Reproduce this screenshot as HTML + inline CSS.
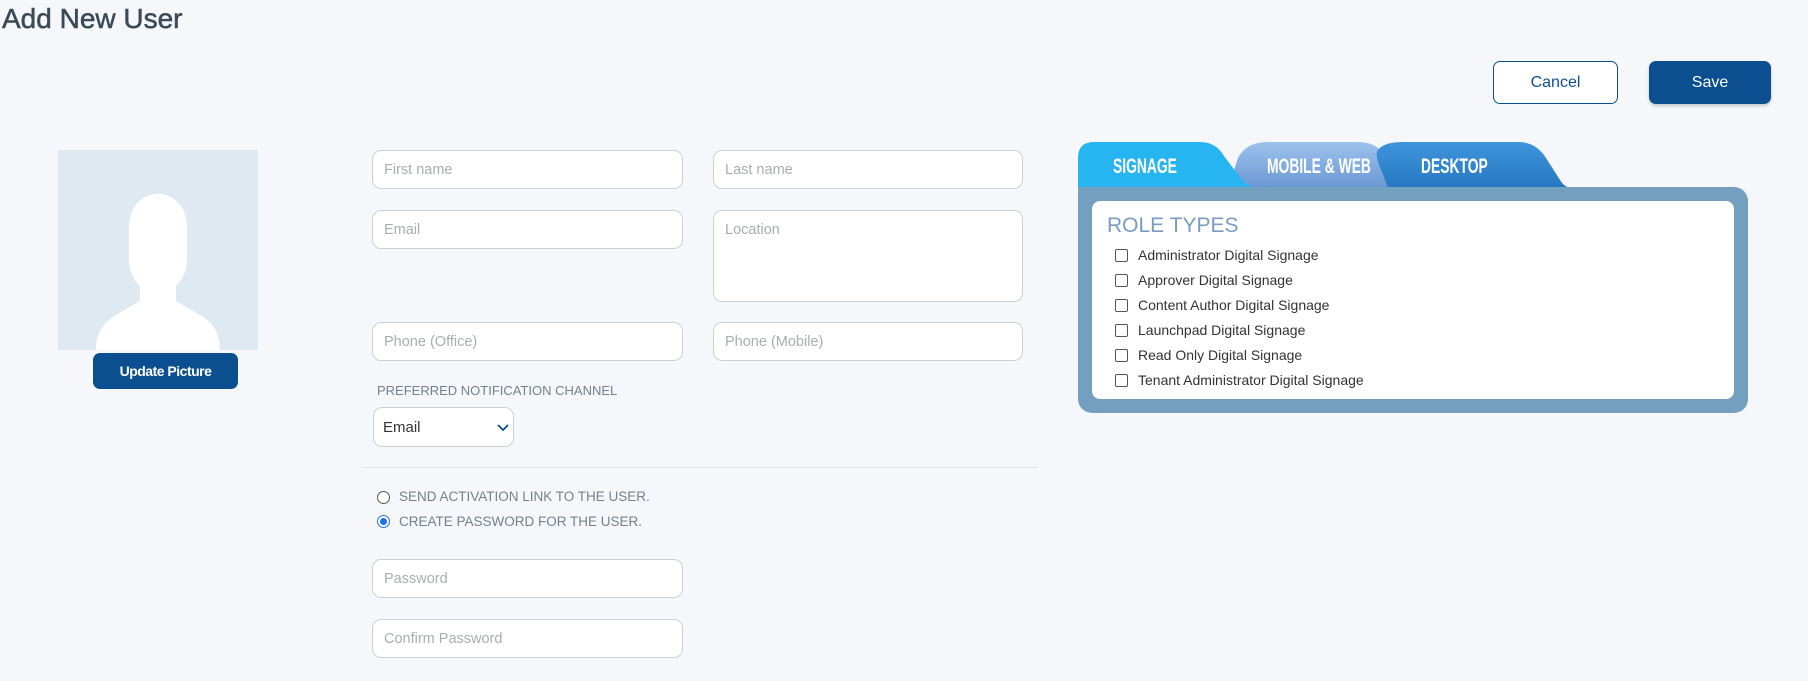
<!DOCTYPE html>
<html><head><meta charset="utf-8"><style>
*{box-sizing:border-box;margin:0;padding:0}
body{width:1808px;height:681px;background:#f5f7fb;font-family:"Liberation Sans",sans-serif;position:relative;overflow:hidden}
.a{position:absolute}
h1{position:absolute;left:2px;top:3px;font-size:28px;font-weight:normal;color:#3a4a56;-webkit-text-stroke:0.5px #3a4a56}
.btn{position:absolute;border-radius:7px;font-size:16px;display:flex;align-items:center;justify-content:center}
.inp{position:absolute;background:#fff;border:1px solid #cdd0d4;border-radius:9px;font-size:14.5px;color:#a9adb1;padding:11px 0 0 11px}
.lbl{position:absolute;font-size:13.5px;color:#76808a}
.cb{position:absolute;left:1115px;width:13px;height:13px;border:1px solid #555;border-radius:2px;background:#fff}
.ct{position:absolute;left:1138px;font-size:14px;color:#333}
.tt{position:absolute;top:155px;color:#fff;font-size:21px;transform:scaleX(0.66);transform-origin:left;font-weight:bold}
</style></head><body>
<h1>Add New User</h1>
<div class="btn" style="left:1493px;top:61px;width:125px;height:43px;border:1px solid #0b4f91;color:#0b4f91;background:#fff">Cancel</div>
<div class="btn" style="left:1649px;top:61px;width:122px;height:43px;background:#0b4f91;color:#fff;box-shadow:0 2px 3px rgba(0,0,0,.2)">Save</div>

<div class="a" style="left:58px;top:150px;width:200px;height:200px;background:#dfe9f2"></div>
<svg class="a" style="left:58px;top:150px" width="200" height="200" viewBox="0 0 200 200">
<path fill="#fff" d="M100 44c-18 0-29 15-29 33v32c0 14 6 22 11 27v15l-24 14c-14 8-20 20-20 35v18h124v-18c0-15-6-27-20-35l-24-14v-15c5-5 11-13 11-27V77c0-18-11-33-29-33z"/>
</svg>
<div class="btn" style="left:93px;top:353px;width:145px;height:36px;background:#0b4f91;color:#fff;font-weight:bold;font-size:14px;letter-spacing:-0.5px">Update Picture</div>

<div class="inp" style="left:372px;top:150px;width:311px;height:39px">First name</div>
<div class="inp" style="left:713px;top:150px;width:310px;height:39px">Last name</div>
<div class="inp" style="left:372px;top:210px;width:311px;height:39px">Email</div>
<div class="inp" style="left:713px;top:210px;width:310px;height:92px">Location</div>
<div class="inp" style="left:372px;top:322px;width:311px;height:39px">Phone (Office)</div>
<div class="inp" style="left:713px;top:322px;width:310px;height:39px">Phone (Mobile)</div>
<div class="lbl" style="left:377px;top:383px;font-size:13px">PREFERRED NOTIFICATION CHANNEL</div>
<div class="inp" style="left:373px;top:407px;width:141px;height:40px;color:#333;font-size:15px;padding-top:11px;padding-left:9px">Email</div>
<svg class="a" style="left:496px;top:423px" width="14" height="10"><path d="M2 2l5 5 5-5" fill="none" stroke="#0b4f91" stroke-width="1.8"/></svg>
<div class="a" style="left:361px;top:467px;width:677px;height:1px;background:#e3e6ea"></div>
<div class="a" style="left:377px;top:491px;width:13px;height:13px;border:1px solid #555;border-radius:50%;background:#fff"></div>
<div class="lbl" style="left:399px;top:489px">SEND ACTIVATION LINK TO THE USER.</div>
<div class="a" style="left:377px;top:515px;width:13px;height:13px;border:1px solid #1a73e8;border-radius:50%;background:#fff"></div>
<div class="a" style="left:380px;top:518px;width:7px;height:7px;border-radius:50%;background:#1a73e8"></div>
<div class="lbl" style="left:399px;top:514px">CREATE PASSWORD FOR THE USER.</div>
<div class="inp" style="left:372px;top:559px;width:311px;height:39px">Password</div>
<div class="inp" style="left:372px;top:619px;width:311px;height:39px">Confirm Password</div>

<svg class="a" style="left:1078px;top:142px" width="500" height="46" viewBox="0 0 500 46">
<defs>
<linearGradient id="m" x1="0" y1="0" x2="0" y2="1"><stop offset="0" stop-color="#9cc2ec"/><stop offset="1" stop-color="#6b98d4"/></linearGradient>
<linearGradient id="d" x1="0" y1="0" x2="0" y2="1"><stop offset="0" stop-color="#3e95dc"/><stop offset="1" stop-color="#2778c0"/></linearGradient>
</defs>
<path fill="url(#m)" d="M150 46 L160 16 Q168 0 190 0 L280 0 Q300 0 308 16 L322 38 Q328 46 342 46 Z"/>
<path fill="url(#d)" d="M310 46 Q308 40 304 30 Q296 12 300 8 Q306 0 325 0 L440 0 Q458 0 468 16 L482 38 Q487 46 494 46 Z"/>
<path fill="#27b5f2" d="M0 46 L0 16 Q0 0 16 0 L122 0 Q138 0 146 14 L164 38 Q170 46 186 46 Z"/>
</svg>
<div class="tt" style="left:1113px">SIGNAGE</div>
<div class="tt" style="left:1267px">MOBILE &amp; WEB</div>
<div class="tt" style="left:1421px">DESKTOP</div>
<div class="a" style="left:1078px;top:187px;width:670px;height:226px;background:#74a0c0;border-radius:0 14px 14px 14px"></div>
<div class="a" style="left:1092px;top:201px;width:642px;height:198px;background:#fff;border-radius:8px"></div>
<div class="a" style="left:1107px;top:214px;font-size:21px;color:#7a9cc2">ROLE TYPES</div>
<div class="cb" style="top:249px"></div><div class="ct" style="top:247px">Administrator Digital Signage</div>
<div class="cb" style="top:274px"></div><div class="ct" style="top:272px">Approver Digital Signage</div>
<div class="cb" style="top:299px"></div><div class="ct" style="top:297px">Content Author Digital Signage</div>
<div class="cb" style="top:324px"></div><div class="ct" style="top:322px">Launchpad Digital Signage</div>
<div class="cb" style="top:349px"></div><div class="ct" style="top:347px">Read Only Digital Signage</div>
<div class="cb" style="top:374px"></div><div class="ct" style="top:372px">Tenant Administrator Digital Signage</div>
</body></html>
